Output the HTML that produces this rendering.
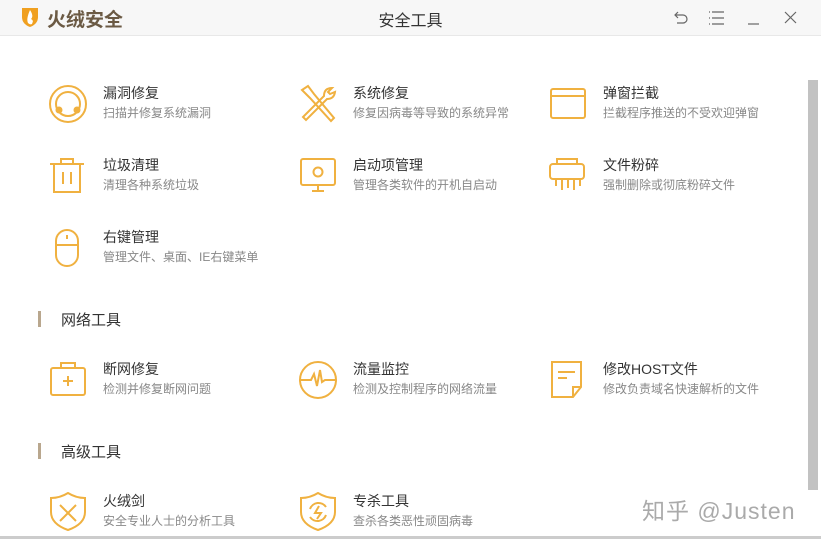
<!DOCTYPE html>
<html><head><meta charset="utf-8"><style>
*{margin:0;padding:0;box-sizing:border-box}
body{width:821px;height:539px;overflow:hidden;background:#fff;font-family:"Liberation Sans","Noto Sans CJK SC",sans-serif;position:relative}
.top{position:absolute;left:0;top:0;width:821px;height:36px;background:#f7f7f7;border-bottom:1px solid #e8e8e8}
.logo{position:absolute;left:47px;top:5px;font-size:19px;font-weight:bold;color:#6b5a44}
.title{position:absolute;left:0;width:821px;top:7px;text-align:center;font-size:16px;color:#333}
.it{position:absolute}
.it svg{position:absolute;left:0;top:0}
.it .n{position:absolute;left:55px;top:-1px;font-size:14px;color:#333;white-space:nowrap}
.it .d{position:absolute;left:55px;top:20px;font-size:12px;color:#888;white-space:nowrap}
.sec{position:absolute;left:38px;font-size:15px;color:#333}
.sec:before{content:"";position:absolute;left:0;top:2px;width:3px;height:16px;background:#b9a78e}
.sec span{margin-left:23px}
.sb{position:absolute;left:808px;top:80px;width:10px;height:410px;background:#c2c2c2}
.wm{position:absolute;left:642px;top:492px;font-size:23px;color:#aaa;letter-spacing:1px}
.bot{position:absolute;left:0;top:536px;width:821px;height:3px;background:#ccc}
</style></head><body>
<div class="top">
<svg style="position:absolute;left:20px;top:6px" width="20" height="22" viewBox="0 0 20 22"><path d="M2 2 L18 2 L18 11 Q18 18 10 21 Q2 18 2 11Z" fill="#f0a020"/><path d="M10 4 Q14 10 11 13 Q14 14 12 18 Q10 19 8 17 Q6 13 10 4Z" fill="#fff"/></svg>
<div class="logo">火绒安全</div>
<div class="title">安全工具</div>
<svg style="position:absolute;left:672px;top:9px" width="130" height="18" viewBox="0 0 130 18" fill="none" stroke="#666" stroke-width="1.2"><path d="M6 3 L3 6 L6 9 M3 6 H11 A4 4 0 0 1 11 14 H5"/><path d="M40 3 H52 M40 9 H52 M40 15 H52 M37 3 H38 M37 9 H38 M37 15 H38"/><path d="M76 15 H87"/><path d="M113 3 L124 14 M124 3 L113 14"/></svg>
</div>

<div class="it" style="left:48px;top:84px"><svg width="40" height="40" viewBox="0 0 40 40" fill="none" stroke="#f0b140" stroke-width="2"><circle cx="20" cy="20" r="18"/><circle cx="20" cy="20" r="12"/><circle cx="11" cy="26" r="2.5" fill="#f0b140"/><circle cx="29" cy="26" r="2.5" fill="#f0b140"/></svg><div class="n">漏洞修复</div><div class="d">扫描并修复系统漏洞</div></div>
<div class="it" style="left:298px;top:84px"><svg width="40" height="40" viewBox="0 0 40 40" fill="none" stroke="#f0b140" stroke-width="2"><path d="M4 6 L10 2 L16 10 L36 34 L33 37 L12 14 Z"/><path d="M34 4 Q26 4 26 12 L5 33 L8 36 L29 15 Q36 15 37 8 L32 10 L30 8Z"/></svg><div class="n">系统修复</div><div class="d">修复因病毒等导致的系统异常</div></div>
<div class="it" style="left:548px;top:84px"><svg width="40" height="40" viewBox="0 0 40 40" fill="none" stroke="#f0b140" stroke-width="2"><rect x="3" y="5" width="34" height="29" rx="2"/><line x1="3" y1="12" x2="37" y2="12"/></svg><div class="n">弹窗拦截</div><div class="d">拦截程序推送的不受欢迎弹窗</div></div>

<div class="it" style="left:48px;top:156px"><svg width="40" height="40" viewBox="0 0 40 40" fill="none" stroke="#f0b140" stroke-width="2"><line x1="2" y1="8" x2="36" y2="8"/><path d="M13 8 V3 H25 V8"/><path d="M6 8 V36 H32 V8"/><line x1="15" y1="16" x2="15" y2="28"/><line x1="23" y1="16" x2="23" y2="28"/></svg><div class="n">垃圾清理</div><div class="d">清理各种系统垃圾</div></div>
<div class="it" style="left:298px;top:156px"><svg width="40" height="40" viewBox="0 0 40 40" fill="none" stroke="#f0b140" stroke-width="2"><rect x="3" y="3" width="34" height="26" rx="2"/><circle cx="20" cy="16" r="4.5"/><path d="M14 35 H26 M20 29 V35"/></svg><div class="n">启动项管理</div><div class="d">管理各类软件的开机自启动</div></div>
<div class="it" style="left:548px;top:156px"><svg width="40" height="40" viewBox="0 0 40 40" fill="none" stroke="#f0b140" stroke-width="2"><path d="M9 8 V3 H29 V8"/><rect x="2" y="8" width="34" height="15" rx="3"/><path d="M8 23 V30 M14 23 V34 M20 23 V32 M26 23 V34 M32 23 V30"/></svg><div class="n">文件粉碎</div><div class="d">强制删除或彻底粉碎文件</div></div>

<div class="it" style="left:48px;top:228px"><svg width="40" height="40" viewBox="0 0 40 40" fill="none" stroke="#f0b140" stroke-width="2"><rect x="8" y="2" width="22" height="36" rx="11"/><line x1="8" y1="17" x2="30" y2="17"/><line x1="19" y1="7" x2="19" y2="11"/></svg><div class="n">右键管理</div><div class="d">管理文件、桌面、IE右键菜单</div></div>

<div class="sec" style="top:309px"><span>网络工具</span></div>

<div class="it" style="left:48px;top:360px"><svg width="40" height="40" viewBox="0 0 40 40" fill="none" stroke="#f0b140" stroke-width="2"><rect x="3" y="8" width="34" height="27" rx="2"/><path d="M13 8 V3 H27 V8"/><path d="M20 16 V26 M15 21 H25"/></svg><div class="n">断网修复</div><div class="d">检测并修复断网问题</div></div>
<div class="it" style="left:298px;top:360px"><svg width="40" height="40" viewBox="0 0 40 40" fill="none" stroke="#f0b140" stroke-width="2"><circle cx="20" cy="20" r="18"/><path d="M2 20 H13 L16 14 L19 26 L22 10 L24 22 L27 20 H38"/></svg><div class="n">流量监控</div><div class="d">检测及控制程序的网络流量</div></div>
<div class="it" style="left:548px;top:360px"><svg width="40" height="40" viewBox="0 0 40 40" fill="none" stroke="#f0b140" stroke-width="2"><path d="M4 2 H33 V27 L25 37 H4 Z"/><path d="M33 27 H25 V37"/><path d="M10 12 H27 M10 18 H19"/></svg><div class="n">修改HOST文件</div><div class="d">修改负责域名快速解析的文件</div></div>

<div class="sec" style="top:441px"><span>高级工具</span></div>

<div class="it" style="left:48px;top:492px"><svg width="40" height="40" viewBox="0 0 40 40" fill="none" stroke="#f0b140" stroke-width="2"><path d="M3 6 Q12 6 20 1 Q28 6 37 6 V20 Q37 32 20 38 Q3 32 3 20Z"/><path d="M12 13 L28 29 M28 13 L12 29"/></svg><div class="n">火绒剑</div><div class="d">安全专业人士的分析工具</div></div>
<div class="it" style="left:298px;top:492px"><svg width="40" height="40" viewBox="0 0 40 40" fill="none" stroke="#f0b140" stroke-width="2"><path d="M3 6 Q12 6 20 1 Q28 6 37 6 V20 Q37 32 20 38 Q3 32 3 20Z"/><path d="M12 17 A9 9 0 0 1 28 15 M28 23 A9 9 0 0 1 12 25"/><path d="M21 14 L17 21 H23 L19 27"/></svg><div class="n">专杀工具</div><div class="d">查杀各类恶性顽固病毒</div></div>

<div class="sb"></div>
<div class="wm">知乎 @Justen</div>
<div class="bot"></div>
</body></html>
